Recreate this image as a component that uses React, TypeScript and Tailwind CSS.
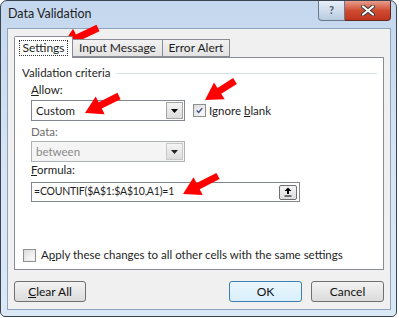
import React from "react";

const font = { fontFamily: 'Lato, "Noto Sans", sans-serif' };

type Pt = [number, number];

// red pointer arrow, shaft + triangular head
function arrowPoints(tail: Pt, tip: Pt) {
  const dx = tip[0] - tail[0];
  const dy = tip[1] - tail[1];
  const len = Math.hypot(dx, dy);
  const ux = dx / len;
  const uy = dy / len;
  const nx = -uy;
  const ny = ux;
  const head = 17;
  const hw = 10;
  const sw = 3.5;
  const bx = tip[0] - ux * head;
  const by = tip[1] - uy * head;
  const p: Pt[] = [
    [tail[0] + nx * sw, tail[1] + ny * sw],
    [bx + nx * sw, by + ny * sw],
    [bx + nx * hw, by + ny * hw],
    tip,
    [bx - nx * hw, by - ny * hw],
    [bx - nx * sw, by - ny * sw],
    [tail[0] - nx * sw, tail[1] - ny * sw],
  ];
  return p.map((q) => q.join(",")).join(" ");
}

const arrows: [Pt, Pt][] = [
  [[98, 28], [62, 45]],
  [[119, 96], [85, 113]],
  [[235, 81], [205, 100]],
  [[218, 176], [183, 194]],
];

const Check = ({ checked }: { checked?: boolean }) => (
  <div className="w-[13px] h-[13px] border border-[#8e8f8f] bg-gradient-to-br from-[#dcdcdc] to-[#f8f8f8] p-[2px] shrink-0">
    <div className="w-full h-full bg-gradient-to-br from-[#e2e2e2] to-[#fbfbfb] flex items-center justify-center">
      {checked && (
        <svg width="9" height="9" viewBox="0 0 9 9">
          <path d="M1 4.5 L3.5 7 L8 1.5" fill="none" stroke="#3b4f8c" strokeWidth="1.8" />
        </svg>
      )}
    </div>
  </div>
);

const DropBtn = ({ disabled }: { disabled?: boolean }) => (
  <div
    className={`w-[17px] h-[17px] border ${
      disabled ? "border-[#c8c8c8]" : "border-[#a6a6a6]"
    } bg-gradient-to-b from-[#f4f4f4] to-[#dcdcdc] flex items-center justify-center`}
  >
    <svg width="7" height="4" viewBox="0 0 7 4">
      <path d="M0 0 H7 L3.5 4 Z" fill={disabled ? "#222" : "#000"} />
    </svg>
  </div>
);

const Btn = ({ children, primary }: { children: React.ReactNode; primary?: boolean }) => (
  <div
    className={`h-[21px] flex items-center justify-center rounded-[3px] border text-[12px] text-[#111] ${
      primary
        ? "border-[#3c7fb1] bg-gradient-to-b from-[#eaf6fd] to-[#d9f0fc]"
        : "border-[#707070] bg-gradient-to-b from-[#f2f2f2] to-[#dcdcdc]"
    }`}
  >
    {children}
  </div>
);

export default function App() {
  return (
    <div className="w-[399px] h-[318px] bg-white relative overflow-hidden" style={font}>
      <div className="w-[397px] h-[317px] rounded-t-[7px] rounded-b-[5px] border border-[#3a4450] bg-gradient-to-b from-[#c4d7ee] via-[#d6e4f4] to-[#dbe8f6] flex flex-col">
        {/* title bar */}
        <div className="h-[27px] flex items-start">
          <div className="pl-[7px] pt-[5px] text-[12.5px] leading-[16px] text-[#1e1e1e] flex-1">
            Data Validation
          </div>
          <div className="flex mr-[5px]">
            <div className="w-[27px] h-[20px] border border-[#6a7a8c] border-t-0 rounded-bl-[4px] bg-gradient-to-b from-[#e6eef7] to-[#b9cbe0] flex items-center justify-center text-[11px] font-bold text-[#4d5a69]">
              ?
            </div>
            <div className="w-[46px] h-[20px] border border-[#5e2a20] border-t-0 border-l-0 rounded-br-[4px] bg-gradient-to-b from-[#e79d8c] via-[#cf4b32] to-[#c0331d] flex items-center justify-center">
              <svg width="14" height="11" viewBox="0 0 14 11">
                <path d="M2 1.5 L12 9.5 M12 1.5 L2 9.5" stroke="#3a3a3a" strokeWidth="4" strokeLinecap="round" />
                <path d="M2 1.5 L12 9.5 M12 1.5 L2 9.5" stroke="#ffffff" strokeWidth="2.2" strokeLinecap="round" />
              </svg>
            </div>
          </div>
        </div>
        {/* client area */}
        <div className="ml-[6px] mr-[5px] mb-[6px] flex-1 border border-[#8da2bb] bg-[#f0f0f0] flex flex-col px-[6px] text-[11.5px] text-[#1e1e1e]">
          {/* tabs */}
          <div className="flex items-end mt-[7px] h-[21px] relative z-10 text-[12px]">
            <div className="h-[22px] w-[59px] border border-[#898c95] border-b-0 bg-white flex items-center justify-center -mb-[1px] rounded-t-[2px]">
              <span className="px-[2px] border border-dotted border-[#333] leading-[14px]">Settings</span>
            </div>
            <div className="h-[18px] w-[90px] border border-[#898c95] border-l-0 bg-gradient-to-b from-[#f2f2f2] to-[#e3e3e3] flex items-center justify-center">
              Input Message
            </div>
            <div className="h-[18px] w-[67px] border border-[#898c95] border-l-0 bg-gradient-to-b from-[#f2f2f2] to-[#e3e3e3] flex items-center justify-center">
              Error Alert
            </div>
          </div>
          {/* panel */}
          <div className="h-[213px] border border-[#898c95] bg-white flex flex-col">
            <div className="flex items-center pl-[7px] pr-[6px] pt-[7px]">
              <span className="leading-[16px] pr-[6px]">Validation criteria</span>
              <div className="flex-1 h-px bg-[#d5dfe5]" />
            </div>
            <div className="pl-[16px] flex flex-col">
              <div className="mt-[1px] leading-[16px]">
                <u>A</u>llow:
              </div>
              <div className="flex items-center mt-[2px]">
                <div className="w-[154px] h-[21px] border border-[#828790] bg-white flex items-center pl-[4px] pr-[1px]">
                  <span className="flex-1">Custom</span>
                  <DropBtn />
                </div>
                <div className="ml-[8px] flex items-center gap-[3px]">
                  <Check checked />
                  <span className="leading-[16px]">
                    Ignore <u>b</u>lank
                  </span>
                </div>
              </div>
              <div className="mt-[3px] leading-[16px] text-[#6d6d6d]">Data:</div>
              <div className="w-[154px] h-[21px] mt-[1px] border border-[#adb2b5] bg-[#f4f4f4] flex items-center pl-[4px] pr-[1px] text-[#8a8a8a]">
                <span className="flex-1">between</span>
                <DropBtn disabled />
              </div>
              <div className="mt-0 leading-[16px]">
                <u>F</u>ormula:
              </div>
              <div className="w-[269px] h-[20px] mt-[4px] border border-[#828790] bg-white flex items-center pl-[2px] pr-[2px]">
                <span className="flex-1 text-[10.5px] tracking-[-0.2px]">=COUNTIF($A$1:$A$10,A1)=1</span>
                <div className="w-[18px] h-[15px] border border-[#707070] rounded-[2px] bg-gradient-to-b from-[#f5f5f5] to-[#dddddd] flex items-center justify-center">
                  <svg width="8" height="10" viewBox="0 0 8 10">
                    <path d="M4 0.5 L7.5 4 H5 V7 H3 V4 H0.5 Z" fill="#000" />
                    <rect x="0.5" y="8.5" width="7" height="1" fill="#000" />
                  </svg>
                </div>
              </div>
            </div>
            <div className="mt-auto mb-[6px] ml-[8px] flex items-center gap-[5px]">
              <Check />
              <span className="leading-[16px]">
                A<u>p</u>ply these changes to all other cells with the same settings
              </span>
            </div>
          </div>
          {/* buttons */}
          <div className="flex mt-[11px]">
            <div className="w-[72px]">
              <Btn>
                <u>C</u>lear All
              </Btn>
            </div>
            <div className="flex-1" />
            <div className="w-[73px]">
              <Btn primary>OK</Btn>
            </div>
            <div className="w-[73px] ml-[9px]">
              <Btn>Cancel</Btn>
            </div>
          </div>
        </div>
      </div>
      {/* annotation arrows */}
      <svg className="absolute inset-0 pointer-events-none" width="399" height="318">
        {arrows.map(([a, b], i) => (
          <polygon key={i} points={arrowPoints(a, b)} fill="#ff0000" />
        ))}
      </svg>
    </div>
  );
}
